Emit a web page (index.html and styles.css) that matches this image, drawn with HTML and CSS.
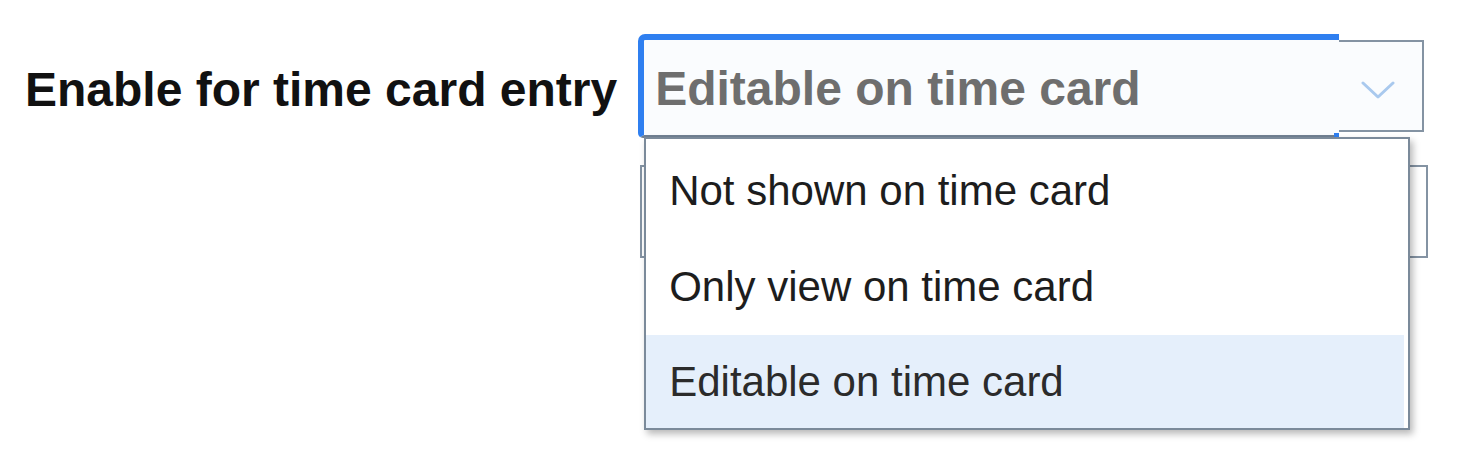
FILE: index.html
```html
<!DOCTYPE html>
<html lang="en">
<head>
    <meta charset="UTF-8">
    <meta name="viewport" content="width=device-width, initial-scale=1.0">
    <title>Time card settings</title>
    <link rel="stylesheet" href="styles.css">
</head>
<body>
    <div class="form">
        <label class="form-label" for="timecard-mode">Enable for time card entry</label>

        <div class="select-wrap" id="timecard-mode">
            <div class="select-box">
                <svg class="select-chevron" width="34" height="20" viewBox="0 0 34 20">
                    <path d="M2 3 L17 17 L32 3" fill="none" stroke="#a9c9ee" stroke-width="3" stroke-linecap="round" stroke-linejoin="round"/>
                </svg>
            </div>
            <div class="select-focus">
                <span class="select-value">Editable on time card</span>
            </div>

            <ul class="select-menu">
                <li class="select-option">Not shown on time card</li>
                <li class="select-option">Only view on time card</li>
                <li class="select-option is-selected">Editable on time card</li>
            </ul>
        </div>

        <div class="form-spacer"></div>
        <div class="form-field"></div>
    </div>
</body>
</html>
```

FILE: styles.css
```css
:root {
    --focus-color: #2f7ff0;
    --border-color: #8493a3;
    --field-bg: #fafcfe;
    --highlight-bg: #e5effb;
}

html,
body {
    min-height: 466px;
}

body {
    margin: 0;
    padding: 0;
    background: #ffffff;
    font-family: 'Liberation Sans', Arial, sans-serif;
}

.form {
    display: grid;
    grid-template-columns: max-content 784px;
    justify-content: start;
    column-gap: 23px;
    row-gap: 29px;
    padding: 40px 0 0 22px;
}

.form-label {
    padding: 4px 0 0 3px;
    font-size: 48px;
    font-weight: bold;
    line-height: 92px;
    color: #111111;
}

/* Select */
.select-wrap {
    position: relative;
    height: 92px;
}

.select-box {
    display: flex;
    align-items: center;
    box-sizing: border-box;
    height: 100%;
    border: 2px solid var(--border-color);
    background: var(--field-bg);
}

.select-chevron {
    margin-left: auto;
    margin-right: 27px;
    margin-top: 8px;
    filter: blur(0.6px);
}

.select-focus {
    position: absolute;
    top: -6px;
    left: -2px;
    width: 701px;
    height: 104px;
    box-sizing: border-box;
    padding: 3px 0 0 11px;
    border-top: 6px solid var(--focus-color);
    border-left: 6px solid var(--focus-color);
    border-bottom: 3px solid #718193;
    border-radius: 7px 0 0 5px;
    background: var(--field-bg);
}

.select-focus::after {
    content: "";
    position: absolute;
    right: 0;
    bottom: -3px;
    width: 5px;
    height: 5px;
    background: var(--focus-color);
}

.select-value {
    font-size: 48px;
    font-weight: bold;
    line-height: 92px;
    color: #6e6e6e;
}

/* Dropdown */
.select-menu {
    position: absolute;
    top: 97px;
    left: 4px;
    z-index: 2;
    width: 766px;
    height: 293px;
    box-sizing: border-box;
    margin: 0;
    padding: 4px 4px 0 0;
    list-style: none;
    border: 2px solid #7b8a9a;
    background: #ffffff;
    box-shadow: 3px 4px 7px rgba(0, 0, 0, 0.28);
}

.select-option {
    height: 96px;
    padding-left: 23px;
    font-size: 42px;
    line-height: 96px;
    color: #1d1d1d;
}

.select-option:last-child {
    height: 93px;
    line-height: 93px;
}

.select-option.is-selected {
    background: var(--highlight-bg);
    color: #2b2b2b;
}

.form-field {
    width: 788px;
    height: 93px;
    box-sizing: border-box;
    border: 2px solid var(--border-color);
    background: #ffffff;
}
```
